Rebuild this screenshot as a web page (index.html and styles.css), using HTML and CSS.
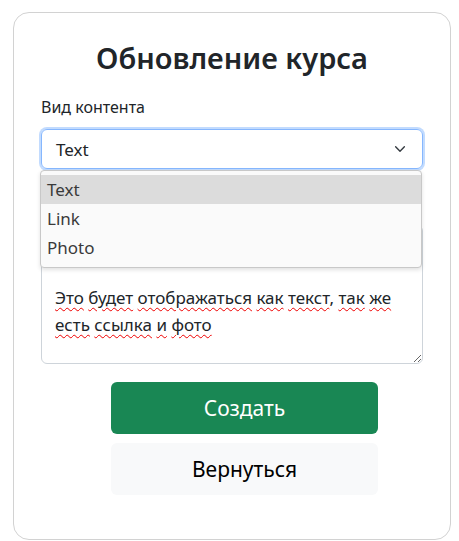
FILE: index.html
```html
<!DOCTYPE html>
<html lang="ru">
<head>
<meta charset="utf-8">
<link rel="stylesheet" href="styles.css">
</head>
<body>
<div class="card">
  <h1 class="title">Обновление курса</h1>
  <div class="field">
    <div class="label">Вид контента</div>
    <div class="select-wrap">
      <div class="select">
        <span>Text</span>
        <svg class="chev" width="14" height="14" viewBox="0 0 16 16"><path d="M3 5.5l5 5 5-5" fill="none" stroke="#343a40" stroke-width="1.6" stroke-linecap="round" stroke-linejoin="round"/></svg>
      </div>
      <div class="dropdown">
        <div class="opt active">Text</div>
        <div class="opt">Link</div>
        <div class="opt">Photo</div>
      </div>
    </div>
  </div>
  <div class="field">
    <div class="label hidden-label">Контент</div>
    <div class="textarea"><span class="sp">Это</span> <span class="sp">будет</span> <span class="sp">отображаться</span> <span class="sp">как</span> <span class="sp">текст</span>, <span class="sp">так</span> <span class="sp">же</span> <span class="sp">есть</span> <span class="sp">ссылка</span> <span class="sp">и</span> <span class="sp">фото</span></div>
  </div>
  <div class="actions">
    <button class="btn btn-green">Создать</button>
    <button class="btn btn-light">Вернуться</button>
  </div>
</div>
</body>
</html>
```
FILE: styles.css
```css
* { box-sizing: border-box; }
body {
  margin: 0;
  background: #fff;
  font-family: "Noto Sans", "Open Sans", sans-serif;
  color: #212529;
}
.card {
  margin: 12px 0 0 13px;
  width: 438px;
  height: 528px;
  border: 1px solid #d2d2d2;
  border-radius: 16px;
  padding: 25px 27px 0 27px;
}
.title {
  margin: 0;
  text-align: center;
  font-size: 29px;
  line-height: 40px;
  font-weight: 600;
  color: #212529;
}
.field { margin-top: 17px; }
.label {
  font-size: 16px;
  line-height: 24px;
  margin-bottom: 10px;
}
.select-wrap { position: relative; }
.select {
  height: 40px;
  border: 1px solid #86b7fe;
  border-radius: 6px;
  box-shadow: 0 0 0 2px #c2dbfe;
  display: flex;
  align-items: center;
  justify-content: space-between;
  padding: 0 15px 0 14px;
  font-size: 17px;
}
.chev { display: block; }
.dropdown {
  position: absolute;
  top: 41px;
  left: -1px;
  width: 382px;
  background: #fafafa;
  border: 1px solid #c8c8c8;
  border-radius: 4px;
  box-shadow: 0 2px 4px rgba(0,0,0,0.12);
  padding: 4px 0 5px;
  z-index: 2;
}
.opt {
  height: 29px;
  line-height: 29px;
  padding-left: 6px;
  font-size: 17px;
  color: #3a3a3a;
}
.opt.active { background: #dcdcdc; }
.hidden-label { visibility: hidden; }
.field + .field { margin-top: 22px; }
.textarea {
  height: 139px;
  border: 1px solid #ced4da;
  border-radius: 6px;
  padding: 58px 12px 0 13px;
  font-size: 17px;
  line-height: 27px;
  resize: vertical;
  overflow: auto;
}
.sp {
  text-decoration: underline wavy #e00;
  text-decoration-thickness: 1px;
  text-underline-offset: 3px;
}
.actions {
  margin-top: 18px;
  margin-left: 70px;
  width: 267px;
  display: flex;
  flex-direction: column;
  gap: 9px;
}
.btn {
  height: 52px;
  border: none;
  border-radius: 6px;
  font-family: inherit;
  font-size: 21px;
}
.btn-green { background: #198754; color: #fff; }
.btn-light { background: #f8f9fa; color: #000; }
```
